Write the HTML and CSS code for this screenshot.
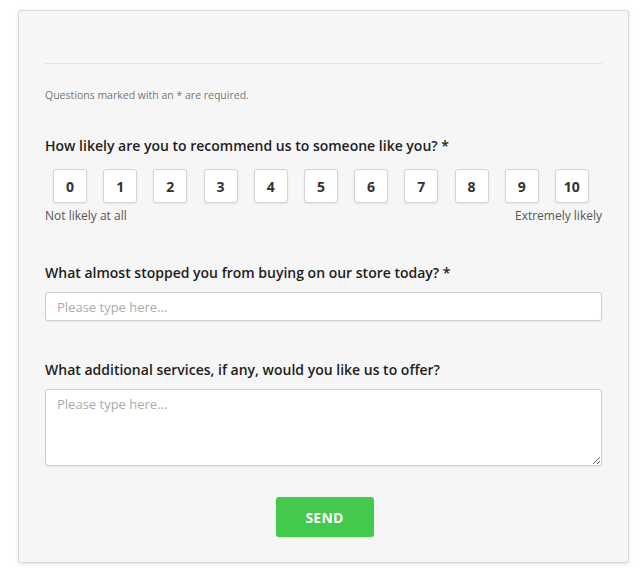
FILE: index.html
```html
<!DOCTYPE html>
<html>
<head>
<meta charset="utf-8">
<link rel="stylesheet" href="styles.css">
</head>
<body>
<form class="card">
  <div class="header"></div>
  <p class="note">Questions marked with an * are required.</p>

  <div class="question q-nps">
    <h2 class="title">How likely are you to recommend us to someone like you? *</h2>
    <div class="scale">
      <span class="opt">0</span><span class="opt">1</span><span class="opt">2</span><span class="opt">3</span><span class="opt">4</span><span class="opt">5</span><span class="opt">6</span><span class="opt">7</span><span class="opt">8</span><span class="opt">9</span><span class="opt">10</span>
    </div>
    <div class="scale-labels">
      <span>Not likely at all</span>
      <span>Extremely likely</span>
    </div>
  </div>

  <div class="question q-input">
    <h2 class="title">What almost stopped you from buying on our store today? *</h2>
    <input class="field" type="text" placeholder="Please type here...">
  </div>

  <div class="question q-text">
    <h2 class="title">What additional services, if any, would you like us to offer?</h2>
    <textarea class="field area" placeholder="Please type here..."></textarea>
  </div>

  <div class="actions">
    <button class="send" type="button">SEND</button>
  </div>
</form>
</body>
</html>
```

FILE: styles.css
```css
html, body {
  margin: 0;
  padding: 0;
  background: #ffffff;
}
body {
  padding: 10px 11px 12px 18px;
  font-family: "Open Sans", "Liberation Sans", sans-serif;
  color: #222;
}
.card {
  box-sizing: border-box;
  width: 611px;
  height: 553px;
  background: #f6f6f6;
  border: 1px solid #d9d9d9;
  border-radius: 3px;
  box-shadow: 0 1px 4px rgba(0,0,0,0.12);
  padding: 0 26px 0 26px;
  display: flex;
  flex-direction: column;
}
.header {
  height: 52px;
  border-bottom: 1px solid #e3e3e3;
  flex: none;
}
.note {
  margin: 23px 0 0 0;
  font-size: 10.5px;
  line-height: 16px;
  color: #777;
}
.title {
  margin: 0;
  font-size: 14px;
  font-weight: 600;
  line-height: 20px;
  color: #1e1e1e;
}
.q-nps {
  margin-top: 33px;
}
.scale {
  display: flex;
  gap: 16.2px;
  padding-left: 8px;
  margin-top: 13px;
}
.opt {
  box-sizing: border-box;
  width: 34px;
  height: 34px;
  background: #fff;
  border: 1px solid #d4d4d4;
  border-radius: 3px;
  box-shadow: 0 1px 2px rgba(0,0,0,0.08);
  display: flex;
  align-items: center;
  justify-content: center;
  font-size: 14px;
  font-weight: 700;
  color: #333;
}
.scale-labels {
  display: flex;
  justify-content: space-between;
  margin-top: 4px;
  font-size: 12px;
  line-height: 18px;
  color: #555;
}
.q-input {
  margin-top: 38px;
}
.q-text {
  margin-top: 39px;
}
.field {
  box-sizing: border-box;
  display: block;
  width: 100%;
  height: 29px;
  margin-top: 9px;
  background: #fff;
  border: 1px solid #cfcfcf;
  border-radius: 3px;
  box-shadow: 0 1px 2px rgba(0,0,0,0.06);
  padding: 0 11px;
  font-family: "Open Sans", "Liberation Sans", sans-serif;
  font-size: 13px;
  color: #333;
  outline: none;
}
.field::placeholder {
  color: #ababab;
}
.area {
  height: 77px;
  padding: 5px 11px;
  resize: vertical;
  line-height: 18px;
}
.actions {
  display: flex;
  justify-content: center;
  margin-top: 31px;
}
.send {
  width: 98px;
  height: 40px;
  margin-left: 2px;
  background: #43c94b;
  border: none;
  border-radius: 3px;
  box-shadow: 0 1px 2px rgba(0,0,0,0.1);
  color: #fff;
  font-family: "Open Sans", "Liberation Sans", sans-serif;
  font-size: 14px;
  font-weight: 700;
  letter-spacing: 0.2px;
}
```
